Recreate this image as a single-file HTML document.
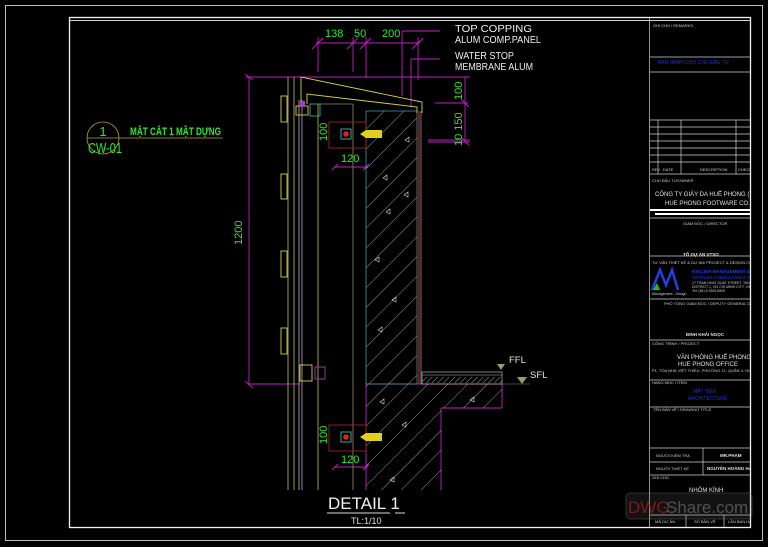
<!DOCTYPE html>
<html><head><meta charset="utf-8"><style>
html,body{margin:0;padding:0;background:#000;width:768px;height:547px;overflow:hidden}
svg{display:block}
text{font-family:"Liberation Sans","DejaVu Sans",sans-serif}
</style></head><body>
<svg width="768" height="547" viewBox="0 0 768 547" xmlns="http://www.w3.org/2000/svg">
<defs>
<pattern id="hatch" patternUnits="userSpaceOnUse" width="14" height="14" patternTransform="rotate(45)">
<line x1="0" y1="0" x2="0" y2="14" stroke="#d8d8d8" stroke-width="0.7"/>
</pattern>
<pattern id="hatch2" patternUnits="userSpaceOnUse" width="4" height="4" patternTransform="rotate(45)">
<line x1="0" y1="0" x2="0" y2="4" stroke="#cfcfcf" stroke-width="0.8"/>
</pattern>
<clipPath id="tb"><rect x="650" y="18" width="100" height="509"/></clipPath>
</defs>
<rect width="768" height="547" fill="#000"/>
<rect x="5.5" y="5.5" width="757" height="535" fill="none" stroke="#bdbdbd" stroke-width="1"/>
<rect x="69.5" y="17.5" width="681" height="510" fill="none" stroke="#f0f0f0" stroke-width="1.3"/>
<line x1="70" y1="20.5" x2="750" y2="20.5" stroke="#d0d0d0" stroke-width="1"/>

<circle cx="103" cy="138" r="16" fill="none" stroke="#b8a040" stroke-width="0.8"/>
<line x1="87" y1="138" x2="223" y2="138" stroke="#b8a040" stroke-width="0.8"/>
<text x="103" y="136" font-size="13" fill="#2ee82e" text-anchor="middle">1</text>
<text x="88" y="153" font-size="15" fill="#2ee82e" textLength="34" lengthAdjust="spacingAndGlyphs">CW-01</text>
<text x="130" y="135" font-size="11" font-weight="bold" fill="#2ee82e" textLength="91" lengthAdjust="spacingAndGlyphs">MẶT CẮT 1 MẶT DỰNG</text>

<g stroke="#c020c0" stroke-width="0.9" fill="none">
<line x1="316" y1="43" x2="420" y2="43"/>
<line x1="318" y1="37" x2="318" y2="72"/>
<line x1="353" y1="37" x2="353" y2="72"/>
<line x1="366" y1="37" x2="366" y2="78"/>
<line x1="418" y1="37" x2="418" y2="80"/>
<line x1="312" y1="49" x2="323" y2="38"/><line x1="347" y1="49" x2="358" y2="38"/><line x1="360" y1="49" x2="371" y2="38"/><line x1="412" y1="49" x2="423" y2="38"/>
<line x1="246" y1="77" x2="470" y2="77"/>
<line x1="249" y1="77" x2="249" y2="384"/>
<line x1="249" y1="384" x2="300" y2="384"/>
<line x1="245" y1="74" x2="253" y2="80"/><line x1="245" y1="381" x2="253" y2="388"/>
<line x1="465" y1="77" x2="465" y2="142"/>
<line x1="435" y1="103" x2="468" y2="103"/>
<line x1="428" y1="140" x2="470" y2="140"/>
<line x1="428" y1="142" x2="470" y2="142"/>
<line x1="461" y1="99" x2="469" y2="107"/><line x1="461" y1="137" x2="469" y2="145"/>
<line x1="440" y1="31" x2="402" y2="31"/><line x1="402" y1="31" x2="402" y2="96"/>
<line x1="440" y1="59" x2="411" y2="59"/><line x1="411" y1="59" x2="411" y2="107"/>
<line x1="334" y1="167" x2="368" y2="167"/><line x1="332" y1="170" x2="338" y2="164"/><line x1="363" y1="170" x2="369" y2="164"/>
<line x1="334" y1="467" x2="368" y2="467"/><line x1="332" y1="470" x2="338" y2="464"/><line x1="363" y1="470" x2="369" y2="464"/>
<line x1="366" y1="384" x2="502" y2="384"/>
<line x1="502" y1="384" x2="502" y2="408"/>
<line x1="441" y1="408" x2="502" y2="408"/>
<line x1="441" y1="408" x2="441" y2="490"/>
<line x1="366" y1="384" x2="366" y2="490"/>
</g>
<g fill="#2ee82e" font-size="11">
<text x="325" y="37">138</text><text x="354" y="37">50</text><text x="382" y="37">200</text>
<text x="242" y="245" transform="rotate(-90 242 245)">1200</text>
<text x="462" y="100" transform="rotate(-90 462 100)">100</text>
<text x="462" y="146" transform="rotate(-90 462 146)">10  150</text>
<text x="327" y="141" transform="rotate(-90 327 141)">100</text>
<text x="341" y="162">120</text>
<text x="327" y="444" transform="rotate(-90 327 444)">100</text>
<text x="341" y="463">120</text>
</g>

<path d="M366 111 H417 V384 H502 V408 H441 V490 H366 Z" fill="url(#hatch)"/>
<rect x="366" y="111" width="51" height="273" fill="none" stroke="#3a9a9a" stroke-width="0.8"/>
<line x1="419" y1="111" x2="419" y2="384" stroke="#e03030" stroke-width="1"/>
<line x1="421" y1="111" x2="421" y2="384" stroke="#c0c0c0" stroke-width="0.6"/>
<rect x="422" y="372" width="80" height="12" fill="none" stroke="#b0b0b0" stroke-width="0.7"/>
<line x1="422" y1="375" x2="502" y2="375" stroke="#b0b0b0" stroke-width="0.6"/>
<rect x="422" y="377" width="80" height="6" fill="url(#hatch2)"/>
<line x1="502" y1="384" x2="530" y2="384" stroke="#888" stroke-width="0.6"/>
<polygon points="497,364 505,364 501,370" fill="#a09868"/>
<polygon points="517,377 527,377 522,384" fill="#a09868"/>
<g fill="#e8e8e8" font-size="9.5"><text x="509" y="363">FFL</text><text x="530" y="378">SFL</text></g>
<g fill="none" stroke="#ddd" stroke-width="0.6">
<path d="M383 178 l4 -3 v5z"/><path d="M386 212 l4 -3 v5z"/><path d="M375 260 l4 -3 v5z"/><path d="M404 195 l4 -3 v5z"/><path d="M392 300 l4 -3 v5z"/><path d="M378 330 l4 -3 v5z"/><path d="M405 140 l4 -3 v5z"/><path d="M380 402 l4 -3 v5z"/><path d="M402 425 l4 -3 v5z"/><path d="M390 480 l4 -3 v5z"/><path d="M470 400 l4 -3 v5z"/>
</g>

<g stroke-width="0.8" fill="none">
<line x1="288" y1="77" x2="288" y2="490" stroke="#c8c060"/>
<line x1="294" y1="77" x2="294" y2="490" stroke="#c8c060"/>
<line x1="299" y1="100" x2="299" y2="490" stroke="#bbb"/>
<line x1="302" y1="100" x2="302" y2="490" stroke="#c0a0e0"/>
<line x1="318" y1="104" x2="318" y2="490" stroke="#c8c060"/>
<line x1="353" y1="104" x2="353" y2="490" stroke="#909060"/>
<line x1="318" y1="104" x2="353" y2="104" stroke="#909060"/>
</g>
<g fill="none" stroke="#d8d040" stroke-width="0.9">
<rect x="281" y="96" width="6" height="26"/><rect x="281" y="174" width="6" height="25"/><rect x="281" y="251" width="6" height="26"/><rect x="281" y="328" width="6" height="26"/>
<path d="M301 104 V77 L422 102 V113"/>
<path d="M307 104 V94 L417 107 V113"/>
<rect x="296" y="106" width="12" height="9"/>
<rect x="310" y="104" width="10" height="12" stroke="#40a0a0"/>
<rect x="300" y="365" width="12" height="16"/>
<rect x="315" y="367" width="10" height="12" stroke="#a040c0"/>
</g>
<rect x="300" y="101" width="5" height="6" fill="#a040c0"/>
<g>
<rect x="329" y="122" width="37" height="26" fill="none" stroke="#a02020" stroke-width="0.9"/>
<rect x="341" y="129" width="10" height="10" fill="none" stroke="#40a0a0"/>
<circle cx="346" cy="134" r="2.8" fill="#e02020"/>
<path d="M360 134 L366 130 H382 V138 H366 Z" fill="#e0d020"/>
<rect x="329" y="425" width="37" height="26" fill="none" stroke="#a02020" stroke-width="0.9"/>
<rect x="341" y="432" width="10" height="10" fill="none" stroke="#40a0a0"/>
<circle cx="346" cy="437" r="2.8" fill="#e02020"/>
<path d="M360 437 L366 433 H382 V441 H366 Z" fill="#e0d020"/>
</g>

<g fill="#eeeeee" font-size="10">
<text x="455" y="32" textLength="77" lengthAdjust="spacingAndGlyphs">TOP COPPING</text>
<text x="455" y="43" textLength="86" lengthAdjust="spacingAndGlyphs">ALUM COMP.PANEL</text>
<text x="455" y="59" textLength="59" lengthAdjust="spacingAndGlyphs">WATER STOP</text>
<text x="455" y="70" textLength="78" lengthAdjust="spacingAndGlyphs">MEMBRANE ALUM</text>
</g>
<text x="328" y="509" font-size="17" fill="#f0f0f0">DETAIL 1</text>
<line x1="327" y1="513" x2="390" y2="513" stroke="#ddd" stroke-width="1"/>
<line x1="395" y1="513" x2="405" y2="513" stroke="#ddd" stroke-width="1"/>
<text x="351" y="524" font-size="9" fill="#e0e0e0">TL:1/10</text>

<g stroke="#cfcfcf" stroke-width="0.7" fill="none">
<line x1="649.5" y1="18" x2="649.5" y2="527"/>
<line x1="650" y1="57" x2="750" y2="57"/>
<line x1="650" y1="72" x2="750" y2="72"/>
<line x1="650" y1="120" x2="750" y2="120"/><line x1="650" y1="127" x2="750" y2="127"/><line x1="650" y1="134" x2="750" y2="134"/><line x1="650" y1="141" x2="750" y2="141"/><line x1="650" y1="148" x2="750" y2="148"/><line x1="650" y1="155" x2="750" y2="155"/><line x1="650" y1="162" x2="750" y2="162"/><line x1="650" y1="174" x2="750" y2="174"/>
<line x1="658" y1="120" x2="658" y2="174"/><line x1="681" y1="120" x2="681" y2="174"/><line x1="736" y1="120" x2="736" y2="174"/>
<line x1="650" y1="218" x2="750" y2="218"/>
<line x1="650" y1="256" x2="750" y2="256"/>
<line x1="650" y1="299" x2="750" y2="299"/>
<line x1="650" y1="340" x2="750" y2="340"/>
<line x1="650" y1="380" x2="750" y2="380"/>
<line x1="650" y1="407" x2="750" y2="407"/>
<line x1="650" y1="448" x2="750" y2="448"/>
<line x1="650" y1="462" x2="750" y2="462"/>
<line x1="703" y1="448" x2="703" y2="462"/>
<line x1="650" y1="475" x2="750" y2="475"/>
<line x1="703" y1="462" x2="703" y2="475"/>
<line x1="650" y1="515" x2="750" y2="515"/>
<line x1="686" y1="515" x2="686" y2="527"/><line x1="724" y1="515" x2="724" y2="527"/>
</g>
<rect x="650" y="209" width="100" height="2" fill="#fff"/>
<rect x="655" y="213" width="95" height="2" fill="#fff"/>
<g clip-path="url(#tb)">
<g fill="#cfcfcf" font-size="4">
<text x="653" y="27">GHI CHÚ / REMARKS</text>
<text x="652" y="171">REV</text><text x="663" y="171">DATE</text><text x="700" y="171">DESCRIPTION</text><text x="738" y="171">CHECK</text>
<text x="652" y="182">CHỦ ĐẦU TƯ/OWNER</text>
<text x="683" y="225">GIÁM ĐỐC / DIRECTOR</text>
<text x="652" y="264">TƯ VẤN THIẾT KẾ &amp; DỰ ÁN/ PROJECT &amp; DESIGN CONSULTANT</text>
<text x="664" y="305">PHÓ TỔNG GIÁM ĐỐC / DEPUTY GENERAL DIRECTOR</text>
<text x="652" y="345">CÔNG TRÌNH / PROJECT</text>
<text x="652" y="372">P1, TÒA NHÀ VIỆT THIỀU, PHƯỜNG 12, QUẬN 3, HCM</text>
<text x="652" y="384">HẠNG MỤC / ITEM</text>
<text x="653" y="411">TÊN BẢN VẼ / DRAWING TITLE</text>
<text x="656" y="457">NGƯỜI KIỂM TRA</text><text x="656" y="470">NGƯỜI THIẾT KẾ</text>
<text x="652" y="479">GHI CHÚ</text>
<text x="655" y="523">MÃ DỰ ÁN</text><text x="694" y="523">SỐ BẢN VẼ</text><text x="728" y="523">LẦN BAN HÀNH</text>
</g>
<g fill="#e0e0e0" font-size="4.5" font-weight="bold">
<text x="683" y="256">TỔ DỰ ÁN VTSO</text>
<text x="686" y="336">ĐINH KHẢI NGỌC</text>
<text x="720" y="457">MR.PHẠM</text>
<text x="707" y="470">NGUYỄN HOÀNG HẢI</text>
</g>
<text x="658" y="64" font-size="5" fill="#2030e0">BAN HÀNH CHO CHỦ ĐẦU TƯ</text>
<text x="655" y="196" font-size="6" fill="#e0e0e0">CÔNG TY GIÀY DA HUẾ PHONG (TNHH)</text>
<text x="665" y="205" font-size="6" fill="#e0e0e0">HUE PHONG FOOTWARE CO., LTD</text>
<text x="677" y="359" font-size="6" fill="#e0e0e0">VĂN PHÒNG HUẾ PHONG</text>
<text x="678" y="366" font-size="6" fill="#e0e0e0">HUE PHONG OFFICE</text>
<text x="693" y="393" font-size="5" fill="#2030e0">MẶT TIỀN</text>
<text x="688" y="400" font-size="5" fill="#2030e0">ARCHITECTURE</text>
<text x="689" y="492" font-size="6" fill="#e0e0e0">NHÔM KÍNH</text>
<path d="M652 290 L660 270 L666 285 L672 270 L678 290" fill="none" stroke="#2040e0" stroke-width="2.5"/>
<path d="M653 290 L657 283 L660 290Z" fill="#20c020"/>
<text x="692" y="273" font-size="4.5" fill="#2040e0" font-weight="bold">ESCLIER MANAGEMENT &amp; DESIGN</text>
<text x="692" y="279" font-size="4.5" fill="#2040e0">VIETNAM CONSULTANCY CO., LTD</text>
<text x="692" y="284" font-size="3.5" fill="#ccc">17 TRAN NHAT DUAT STREET, TAN DINH WARD</text>
<text x="692" y="288" font-size="3.5" fill="#ccc">DISTRICT 1, HO CHI MINH CITY, VIETNAM</text>
<text x="692" y="292" font-size="3.5" fill="#ccc">Tel: (84) 8 3526 8590</text>
<text x="652" y="295" font-size="3.5" fill="#ccc">Management - Design</text>
</g>
<rect x="626" y="493" width="126" height="26" rx="4" fill="rgba(120,120,120,0.15)" stroke="rgba(140,140,140,0.3)"/>
<text x="628" y="513" font-size="17" fill="rgba(200,40,40,0.55)">DWG</text>
<text x="666" y="513" font-size="17" fill="rgba(200,200,200,0.35)">Share.com</text>
</svg>
</body></html>
